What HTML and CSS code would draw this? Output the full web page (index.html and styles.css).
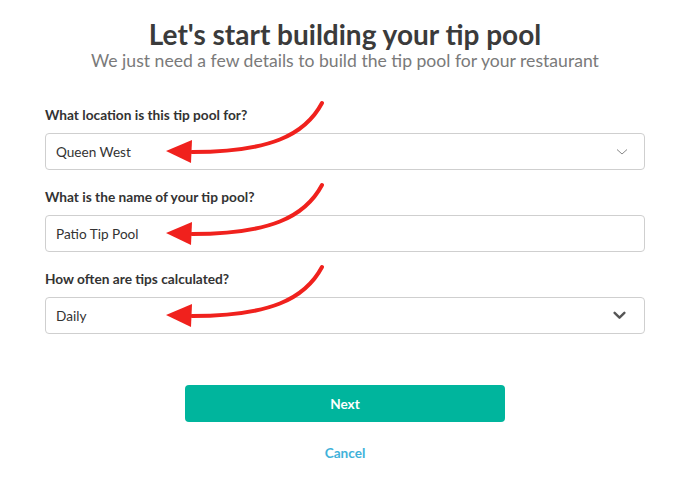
FILE: index.html
```html
<!DOCTYPE html>
<html>
<head>
<meta charset="utf-8">
<link rel="stylesheet" href="styles.css">
</head>
<body>
<main class="page">
  <h1 class="title">Let's start building your tip pool</h1>
  <p class="subtitle">We just need a few details to build the tip pool for your restaurant</p>
  <div class="form">
    <div class="field">
      <div class="label">What location is this tip pool for?</div>
      <div class="control">
        <span>Queen West</span>
        <svg class="chev thin" viewBox="0 0 12 8"><path d="M1 1.5 L6 6 L11 1.5" fill="none" stroke="#888" stroke-width="1"/></svg>
      </div>
      <svg class="arrow" viewBox="0 0 300 70"><path d="M277 7 C260 39 225 56 147 56" fill="none" stroke="#f0211d" stroke-width="4" stroke-linecap="round"/><polygon points="121,55 147,44 146,67" fill="#f0211d"/></svg>
    </div>
    <div class="field">
      <div class="label">What is the name of your tip pool?</div>
      <div class="control"><span>Patio Tip Pool</span></div>
      <svg class="arrow" viewBox="0 0 300 70"><path d="M277 7 C260 39 225 56 147 56" fill="none" stroke="#f0211d" stroke-width="4" stroke-linecap="round"/><polygon points="121,55 147,44 146,67" fill="#f0211d"/></svg>
    </div>
    <div class="field">
      <div class="label">How often are tips calculated?</div>
      <div class="control">
        <span>Daily</span>
        <svg class="chev bold" viewBox="0 0 12 8"><path d="M1.5 1.5 L6 6 L10.5 1.5" fill="none" stroke="#555" stroke-width="2.2" stroke-linecap="round" stroke-linejoin="round"/></svg>
      </div>
      <svg class="arrow" viewBox="0 0 300 70"><path d="M277 7 C260 39 225 56 147 56" fill="none" stroke="#f0211d" stroke-width="4" stroke-linecap="round"/><polygon points="121,55 147,44 146,67" fill="#f0211d"/></svg>
    </div>
  </div>
  <div class="actions">
    <div class="btn">Next</div>
    <div class="cancel">Cancel</div>
  </div>
</main>
</body>
</html>
```

FILE: styles.css
```css
html, body {
  margin: 0;
  padding: 0;
  background: #fff;
}
body {
  font-family: Lato, "Liberation Sans", sans-serif;
  color: #333;
}
.page {
  width: 600px;
  padding: 18px 0 0 45px;
}
.title {
  margin: 0;
  text-align: center;
  font-size: 28px;
  line-height: 32px;
  font-weight: 700;
  color: #3b3b3b;
}
.subtitle {
  margin: 0;
  text-align: center;
  font-size: 17.6px;
  line-height: 22px;
  color: #7a7a7a;
}
.form {
  margin-top: 34px;
  display: flex;
  flex-direction: column;
  gap: 18px;
}
.field {
  position: relative;
}
.label {
  font-size: 13.7px;
  line-height: 18px;
  font-weight: 700;
  color: #333;
  margin-bottom: 9px;
}
.control {
  box-sizing: border-box;
  height: 37px;
  border: 1px solid #cfcfcf;
  border-radius: 4px;
  padding: 0 14px 0 10px;
  display: flex;
  align-items: center;
  justify-content: space-between;
  font-size: 13.6px;
  color: #333;
}
.chev.thin {
  width: 12px;
  height: 8px;
  margin-right: 2px;
}
.chev.bold {
  width: 13px;
  height: 9px;
  margin-right: 4px;
}
.arrow {
  position: absolute;
  left: 0;
  top: -10px;
  width: 300px;
  height: 70px;
  overflow: visible;
}
.actions {
  margin-top: 51px;
  display: flex;
  flex-direction: column;
  align-items: center;
}
.btn {
  width: 320px;
  height: 37px;
  border-radius: 4px;
  background: #00b59d;
  color: #fff;
  font-size: 13.6px;
  font-weight: 700;
  display: flex;
  align-items: center;
  justify-content: center;
}
.cancel {
  margin-top: 22px;
  font-size: 13.6px;
  line-height: 18px;
  font-weight: 700;
  color: #3fb2da;
}
```
